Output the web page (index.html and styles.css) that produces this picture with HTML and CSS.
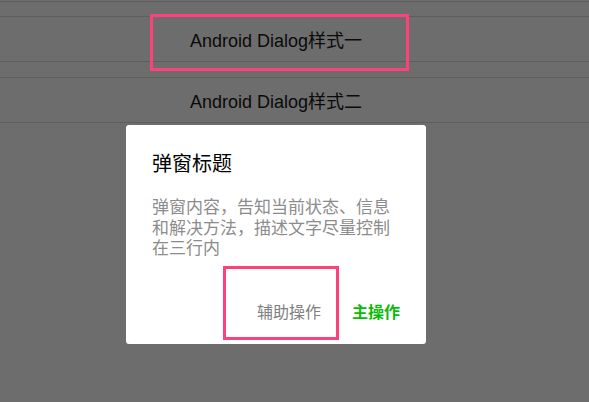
FILE: index.html
```html
<!DOCTYPE html>
<html lang="zh-CN">
<head>
<meta charset="utf-8">
<title>Android Dialog</title>
<link rel="stylesheet" href="styles.css">
</head>
<body>
  <div class="list">
    <div class="list-top"></div>
    <div class="cell">Android Dialog样式一</div>
    <div class="cell">Android Dialog样式二</div>
  </div>

  <div class="mask"></div>

  <div class="dialog">
    <div class="dialog-title">弹窗标题</div>
    <div class="dialog-body">弹窗内容，告知当前状态、信息和解决方法，描述文字尽量控制在三行内</div>
    <div class="dialog-actions">
      <span class="btn btn-default">辅助操作</span>
      <span class="btn btn-primary">主操作</span>
    </div>
  </div>

  <div class="mark mark-cell"></div>
  <div class="mark mark-btn"></div>
</body>
</html>
```
FILE: styles.css
```css
html, body {
  margin: 0;
  padding: 0;
  height: 100%;
  overflow: hidden;
}

body {
  background: #6d6d6d;
  font-family: "Liberation Sans", "Noto Sans CJK SC", sans-serif;
  color: #0a0a0a;
}

.list {
  padding-right: 37px;
}

.list-top {
  height: 1px;
  border-bottom: 1px solid #5e5e5e;
  margin-right: -37px;
}

.cell {
  box-sizing: border-box;
  height: 46px;
  margin-top: 14px;
  margin-right: -37px;
  padding-right: 37px;
  border-top: 1px solid #5e5e5e;
  border-bottom: 1px solid #5e5e5e;
  display: flex;
  align-items: center;
  justify-content: center;
  font-size: 18px;
}

.cell + .cell {
  margin-top: 15px;
}

.mask {
  position: fixed;
  inset: 0;
}

.dialog {
  position: fixed;
  left: 126px;
  top: 125px;
  width: 300px;
  height: 219px;
  box-sizing: border-box;
  background: #fff;
  border-radius: 3px;
  padding: 25px 26px 0 26px;
  display: flex;
  flex-direction: column;
}

.dialog-title {
  font-size: 20px;
  line-height: 28px;
  color: #000;
}

.dialog-body {
  margin-top: 20px;
  font-size: 17px;
  line-height: 20.5px;
  color: #8c8c8c;
  word-break: break-all;
}

.dialog-actions {
  margin-top: auto;
  margin-bottom: 21px;
  display: flex;
  justify-content: flex-end;
  gap: 31px;
  font-size: 16px;
  line-height: 20px;
}

.btn-default {
  color: #808080;
}

.btn-primary {
  color: #09bb07;
  font-weight: bold;
}

/* highlight frames */
.mark {
  position: fixed;
  box-sizing: border-box;
  border: 3px solid #fe407b;
}

.mark-cell {
  left: 150px;
  top: 14px;
  width: 259px;
  height: 57px;
}

.mark-btn {
  left: 223px;
  top: 266px;
  width: 116px;
  height: 74px;
}
```
